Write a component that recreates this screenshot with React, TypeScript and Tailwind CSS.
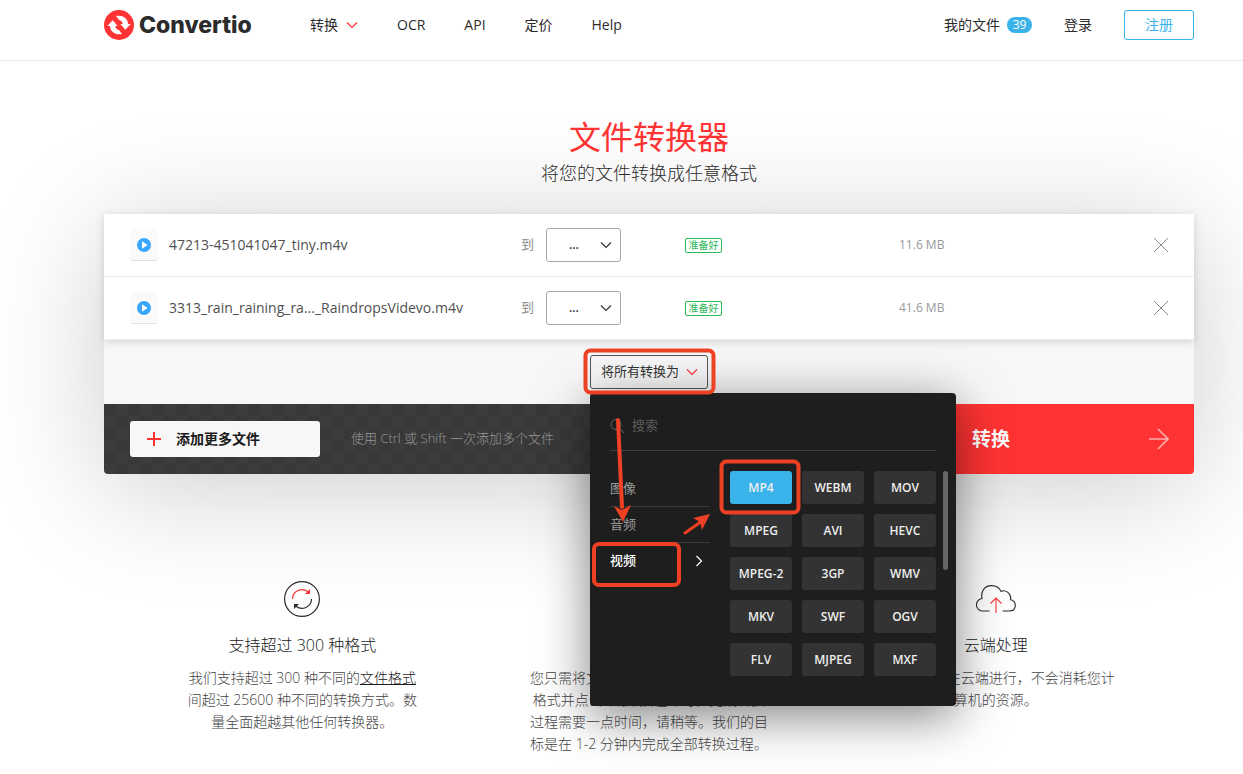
import { useState } from 'react';
import clsx from 'clsx';

type FileItem = {
    id: string;
    name: string;
    size: string;
};

const files: FileItem[] = [
    { id: 'f1', name: '47213-451041047_tiny.m4v', size: '11.6 MB' },
    { id: 'f2', name: '3313_rain_raining_ra..._RaindropsVidevo.m4v', size: '41.6 MB' },
];

const categories = ['图像', '音频', '视频'];

const formats = [
    'MP4', 'WEBM', 'MOV',
    'MPEG', 'AVI', 'HEVC',
    'MPEG-2', '3GP', 'WMV',
    'MKV', 'SWF', 'OGV',
    'FLV', 'MJPEG', 'MXF',
];

function Chevron({ className }: { className?: string }) {
    return (
        <svg viewBox="0 0 12 8" className={clsx('h-2 w-3', className)} fill="none" stroke="currentColor" strokeWidth="1.2" aria-hidden="true">
            <path d="M1 1.5 6 6.5 11 1.5" />
        </svg>
    );
}

function Logo() {
    return (
        <a href="#" className="flex w-[147px] items-center gap-[5px] text-[#2b2b2b]">
            <svg viewBox="0 0 90 90" className="size-[30px] shrink-0" aria-hidden="true">
                <circle cx="45" cy="45" r="45" fill="#ff3333" />
                <g fill="#fff">
                    <path d="M10 48 26 31 41 48H34C35 58 43 60 45 60L54 72C36 76 18 66 18 48Z" />
                    <path d="M80 42 64 59 49 42H56C55 32 47 30 45 30L36 18C54 14 72 24 72 42Z" />
                </g>
            </svg>
            <span className="font-[Inter,sans-serif] text-[23px] leading-[30px] font-extrabold">Convertio</span>
        </a>
    );
}

function Header() {
    return (
        <header className="flex h-[61px] items-center border-b border-[#e6e6e6] bg-white pr-[49px] pb-2.5 pl-[104px] text-sm text-[#2b2b2b]">
            <Logo />
            <nav className="ml-[59px] flex items-center gap-[39px]">
                <a href="#" className="flex items-center gap-2">
                    转换 <Chevron className="text-[#ff3333]" />
                </a>
                <a href="#">OCR</a>
                <a href="#">API</a>
                <a href="#">定价</a>
                <a href="#">Help</a>
            </nav>
            <div className="ml-auto flex items-center gap-8">
                <a href="#" className="flex items-center gap-[7px]">
                    我的文件
                    <span className="w-[25px] rounded-full bg-[#3ab3ea] text-center text-xs leading-4 text-white">39</span>
                </a>
                <a href="#">登录</a>
                <a href="#" className="w-[70px] rounded-[3px] border border-[#3ab3ea] text-center leading-7 text-[#3ab3ea]">
                    注册
                </a>
            </div>
        </header>
    );
}

function FileRow({ file }: { file: FileItem }) {
    return (
        <li className="grid h-[63px] grid-cols-[391fr_164fr_214fr_269fr] items-center border-b border-[#eeeeee] bg-white px-[26px]">
            <div className="flex items-center gap-[11px]">
                <span className="flex h-8 w-7 items-center justify-center rounded-[3px] border-b border-[#e2e2e2] bg-[#fafafa]">
                    <svg viewBox="0 0 14 14" className="size-3.5" aria-hidden="true">
                        <circle cx="7" cy="7" r="7" fill="#3aa6ff" />
                        <path d="M5 3.2 10.6 7 5 10.8Z" fill="#fff" />
                    </svg>
                </span>
                <span className="text-sm text-[#505050]">{file.name}</span>
            </div>
            <div className="flex items-center gap-3">
                <label htmlFor={file.id} className="text-[13px] text-[#8c8c8c]">到</label>
                <div className="relative">
                    <select
                        id={file.id}
                        defaultValue="..."
                        className="h-[34px] w-[75px] appearance-none rounded-[3px] border border-[#a8a8a8] bg-white pl-[22px] text-xs font-semibold text-[#333333]"
                    >
                        <option>...</option>
                        {formats.map((f) => (
                            <option key={f}>{f}</option>
                        ))}
                    </select>
                    <Chevron className="pointer-events-none absolute top-[13px] right-[9px] text-[#333333]" />
                </div>
            </div>
            <div className="flex">
                <span className="w-[37px] rounded-[2px] border border-[#2bb857] text-center text-[10px] leading-[13px] text-[#2bb857]">
                    准备好
                </span>
            </div>
            <div className="flex items-center justify-between">
                <span className="text-xs text-[#999999]">{file.size}</span>
                <button type="button" aria-label="删除" className="text-[#888888]">
                    <svg viewBox="0 0 14 14" className="size-3.5" fill="none" stroke="currentColor" aria-hidden="true">
                        <path d="M0 0 14 14M14 0 0 14" />
                    </svg>
                </button>
            </div>
        </li>
    );
}

function FormatMenu() {
    const [category, setCategory] = useState('视频');
    const [format, setFormat] = useState('MP4');

    return (
        <div className="absolute top-[38px] left-0 z-10 w-[366px] rounded bg-[#1e1e1e] pt-[9px] pr-2 pb-[30px] pl-5 shadow-[0_10px_50px_rgba(0,0,0,0.5)]">
            <label className="mr-3 flex h-[49px] items-center gap-2 border-b border-[#3f3f3f] text-[#666666]">
                <svg viewBox="0 0 14 14" className="size-3.5 shrink-0" fill="none" stroke="currentColor" aria-hidden="true">
                    <circle cx="6" cy="5.5" r="5" />
                    <path d="M9.5 9 14 14" />
                </svg>
                <input
                    type="text"
                    placeholder="搜索"
                    aria-label="搜索"
                    className="w-full bg-transparent text-[13px] outline-none placeholder:text-[#5c5c5c]"
                />
            </label>
            <div className="mt-5 flex">
                <div className="w-[100px]">
                    {categories.map((c) => (
                        <button
                            key={c}
                            type="button"
                            onClick={() => setCategory(c)}
                            className={clsx(
                                'flex h-9 w-full items-center justify-between border-b pr-[7px] text-[13px] last:border-transparent',
                                c === category ? 'border-transparent font-medium text-white' : 'border-[#383838] text-[#999999]'
                            )}
                        >
                            {c}
                            {c === category && (
                                <svg viewBox="0 0 8 12" className="h-3 w-2" fill="none" stroke="currentColor" strokeWidth="1.2" aria-hidden="true">
                                    <path d="M1.5 1 6.5 6 1.5 11" />
                                </svg>
                            )}
                        </button>
                    ))}
                </div>
                <div className="ml-5 grid w-[206px] grid-cols-3 gap-2.5">
                    {formats.map((f) => (
                        <button
                            key={f}
                            type="button"
                            onClick={() => setFormat(f)}
                            className={clsx(
                                'h-[33px] rounded-[3px] text-xs font-semibold text-[#eeeeee]',
                                f === format ? 'bg-[#3ab3ea]' : 'bg-[#333333]'
                            )}
                        >
                            {f}
                        </button>
                    ))}
                </div>
                <div className="ml-[7px] h-[99px] w-[5px] rounded-full bg-[#666666]" />
            </div>
        </div>
    );
}

// hand-drawn style hints that walk the user through the menu
function Hints() {
    return (
        <svg viewBox="0 0 220 242" className="pointer-events-none absolute -top-2 -left-2 z-20 h-[242px] w-[220px]" fill="none" aria-hidden="true">
            <g stroke="#ee4023" strokeWidth="4">
                <rect x="3.500" y="3.500" width="128" height="42" rx="5" />
                <rect x="139.500" y="114.500" width="77" height="51" rx="5" />
                <rect x="12" y="197" width="85" height="41" rx="5" />
                <path d="M36 73 40 160" strokeLinecap="round" />
                <path d="M103 186 120 174" strokeWidth="3" strokeLinecap="round" />
            </g>
            <g fill="#ee4023">
                <path d="M41 175 32 159 40 163 49 158Z" />
                <path d="M128 167 111 171 118 175 120 183Z" />
            </g>
        </svg>
    );
}

function Converter() {
    return (
        <section className="mt-[29px] rounded bg-[#f7f7f7] shadow-[0_15px_120px_rgba(0,0,0,0.2)]">
            <ul className="shadow-[0_2px_8px_rgba(0,0,0,0.15)]">
                {files.map((f) => (
                    <FileRow key={f.id} file={f} />
                ))}
            </ul>
            <div className="flex h-16 items-center justify-center">
                <div className="relative">
                    <button
                        type="button"
                        aria-expanded="true"
                        className="flex h-[34px] w-[118px] items-center justify-between rounded-[3px] border border-[#555555] pr-[9px] pl-2.5 text-[13px] text-[#333333]"
                    >
                        将所有转换为
                        <Chevron className="text-[#ff3333]" />
                    </button>
                    <FormatMenu />
                    <Hints />
                </div>
            </div>
            <div className="flex h-[70px] overflow-hidden rounded-b">
                <div className="flex flex-1 items-center bg-[repeating-conic-gradient(#3c3c3c_0_25%,#383838_0_50%)] bg-[length:24px_24px] pl-[26px]">
                    <button type="button" className="flex h-9 w-[190px] items-center gap-[15px] rounded-[3px] bg-[#f7f7f7] pl-[17px] text-sm font-bold text-[#1a1a1a]">
                        <svg viewBox="0 0 14 14" className="size-3.5" stroke="#ff3333" strokeWidth="2" aria-hidden="true">
                            <path d="M7 0V14M0 7H14" />
                        </svg>
                        添加更多文件
                    </button>
                    <p className="ml-[31px] text-[13px] font-light text-[#999999]">使用 Ctrl 或 Shift 一次添加多个文件</p>
                </div>
                <button type="button" className="flex w-[254px] items-center justify-between bg-[#ff3333] pr-[25px] pl-8 text-[19px] font-bold text-white">
                    转换
                    <svg viewBox="0 0 20 22" className="h-[22px] w-5 opacity-60" fill="none" stroke="currentColor" strokeWidth="1.6" aria-hidden="true">
                        <path d="M0 11H19M9 1 19 11 9 21" />
                    </svg>
                </button>
            </div>
        </section>
    );
}

function FormatsIcon() {
    return (
        <svg viewBox="0 0 36 36" className="size-9" fill="none" strokeWidth="1.2" aria-hidden="true">
            <circle cx="18" cy="18" r="17.4" stroke="#2b2b2b" />
            <path d="M8.5 18A9.5 9.5 0 0 1 24 10.8" stroke="#ff3333" />
            <path d="M26 8V13H21Z" fill="#ff3333" />
            <path d="M27.5 18A9.5 9.5 0 0 1 12 25.2" stroke="#2b2b2b" />
            <path d="M10 28V23H15Z" fill="#2b2b2b" />
        </svg>
    );
}

function SimpleIcon() {
    return (
        <svg viewBox="0 0 36 36" className="size-9" fill="none" strokeWidth="1.2" aria-hidden="true">
            <circle cx="18" cy="18" r="17.4" stroke="#2b2b2b" />
            <path d="M10 18 16 24 27 12" stroke="#ff3333" />
        </svg>
    );
}

function CloudIcon() {
    return (
        <svg viewBox="0 0 40 36" className="h-9 w-10" fill="none" strokeWidth="1.1" aria-hidden="true">
            <path d="M13.5 30H7.5A6.2 6.2 0 0 1 6 17.5C4.5 9 9.5 4.6 15.5 4.6 20 4.6 23.5 7 25 10.4 29.5 8.5 35.5 12 34.6 18.800 41 20 41 30 33.5 30H26.5" stroke="#2b2b2b" />
            <path d="M20 32V17M14.5 22.5 20 17 25.5 22.5" stroke="#ff3333" />
        </svg>
    );
}

function Features() {
    return (
        <section className="mt-[107px] grid grid-cols-3 px-[25px] text-center text-sm leading-[22px] font-light text-[#444444]">
            <div className="flex flex-col items-center">
                <FormatsIcon />
                <h3 className="mt-4 text-base leading-6 font-light text-[#1a1a1a]">支持超过 300 种格式</h3>
                <p className="mt-2.5 w-60">
                    我们支持超过 300 种不同的<a href="#" className="text-[#1a1a1a] underline">文件格式</a>间超过 25600 种不同的转换方式。数量全面超越其他任何转换器。
                </p>
            </div>
            <div className="flex flex-col items-center">
                <SimpleIcon />
                <h3 className="mt-4 text-base leading-6 font-light text-[#1a1a1a]">快速和简单</h3>
                <p className="mt-2.5 w-60">
                    您只需将文件拖放到页面上，选择输出格式并点击“转换”按钮即可。完成转换过程需要一点时间，请稍等。我们的目标是在 1-2 分钟内完成全部转换过程。
                </p>
            </div>
            <div className="flex flex-col items-center">
                <CloudIcon />
                <h3 className="mt-4 text-base leading-6 font-light text-[#1a1a1a]">云端处理</h3>
                <p className="mt-2.5 w-60">所有转换都在云端进行，不会消耗您计算机的资源。</p>
            </div>
        </section>
    );
}

export default function App() {
    return (
        <div lang="zh-CN" className="overflow-hidden bg-white pb-4 font-['Open_Sans','Noto_Sans_CJK_SC',sans-serif]">
            <Header />
            <main className="pr-[49px] pl-[104px]">
                <h1 className="pt-[54px] text-center text-[32px] leading-[44px] font-normal text-[#ff3333]">文件转换器</h1>
                <p className="mt-0.5 text-center text-lg leading-6 font-light text-[#2b2b2b]">将您的文件转换成任意格式</p>
                <Converter />
                <Features />
            </main>
        </div>
    );
}
